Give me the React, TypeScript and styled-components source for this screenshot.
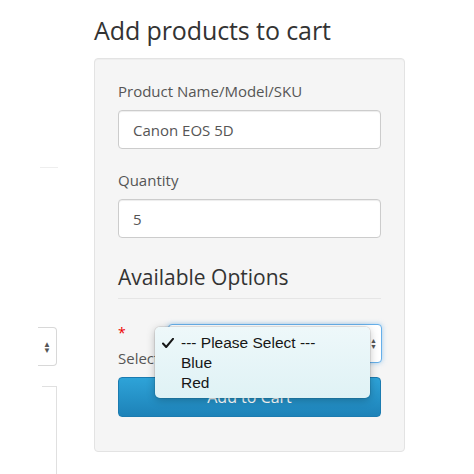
import React from 'react'
import styled, { createGlobalStyle } from 'styled-components'

const GlobalStyle = createGlobalStyle`
  html, body {
    margin: 0;
    padding: 0;
    background: #fff;
  }
  body {
    font-family: 'Open Sans', 'Liberation Sans', sans-serif;
    color: #333;
  }
`

const Page = styled.div`
  display: flex;
  width: 474px;
  height: 474px;
  overflow: hidden;
`

const SideCol = styled.div`
  width: 57px;
  display: flex;
  flex-direction: column;
  padding-top: 167px;
  box-sizing: border-box;
`

const FaintRule = styled.div`
  width: 18px;
  height: 1px;
  margin-left: 40px;
  background: #eee;
`

const SideSelect = styled.div`
  margin-top: 159px;
  margin-left: 38px;
  height: 39px;
  box-sizing: border-box;
  border: 1px solid #d8d8d8;
  border-left: none;
  border-radius: 0 4px 4px 0;
  display: flex;
  flex-direction: column;
  justify-content: center;
  align-items: flex-start;
  padding-left: 5px;
  color: #555;
  font-size: 8px;
  line-height: 6px;
`

const SidePanel = styled.div`
  margin-top: 20px;
  margin-left: 42px;
  flex: 1;
  border-top: 1px solid #e0e0e0;
  border-right: 1px solid #e0e0e0;
`

const Main = styled.div`
  margin-left: 37px;
  width: 311px;
  display: flex;
  flex-direction: column;
`

const Title = styled.h2`
  margin: 14px 0 0;
  font-size: 25px;
  font-weight: 400;
  line-height: 32px;
  color: #333;
  letter-spacing: -0.1px;
`

const Panel = styled.div`
  margin-top: 12px;
  background: #f5f5f5;
  border: 1px solid #e3e3e3;
  border-radius: 4px;
  padding: 22px 23px 34px;
  box-shadow: inset 0 1px 1px rgba(0, 0, 0, 0.03);
`

const FieldLabel = styled.label`
  display: block;
  font-size: 15px;
  line-height: 20px;
  color: #555;
`

const TextInput = styled.div<{ $gap?: number }>`
  margin-top: 9px;
  margin-bottom: ${(p) => p.$gap ?? 0}px;
  height: 39px;
  box-sizing: border-box;
  background: #fff;
  border: 1px solid #ccc;
  border-radius: 4px;
  box-shadow: inset 0 1px 1px rgba(0, 0, 0, 0.075);
  padding: 0 14px;
  display: flex;
  align-items: center;
  font-size: 15px;
  color: #555;
`

const SectionTitle = styled.h3`
  margin: 25px 0 0;
  font-size: 21px;
  font-weight: 400;
  line-height: 28px;
  color: #333;
  padding-bottom: 7px;
  border-bottom: 1px solid #e5e5e5;
`

const OptionRow = styled.div`
  margin-top: 25px;
  display: flex;
  align-items: flex-start;
`

const OptionLabel = styled.div`
  width: 50px;
  height: 39px;
  font-size: 15px;
  line-height: 20px;
  color: #555;
  padding-top: 2px;
  box-sizing: border-box;
`

const Required = styled.span`
  display: block;
  color: #e00;
  font-size: 14px;
  line-height: 14px;
  height: 22px;
`

const SelectWrap = styled.div`
  position: relative;
  flex: 1;
  margin-right: -1px;
`

const SelectBox = styled.div`
  height: 39px;
  box-sizing: border-box;
  background: #fff;
  border: 1px solid #66afe9;
  border-radius: 4px;
  box-shadow: 0 0 5px rgba(102, 175, 233, 0.6);
  display: flex;
  align-items: center;
  justify-content: flex-end;
  padding-right: 4px;
`

const Arrows = styled.div`
  display: flex;
  flex-direction: column;
  font-size: 7px;
  line-height: 6px;
  color: #555;
`

const Dropdown = styled.div`
  position: absolute;
  left: -13px;
  top: 3px;
  width: 215px;
  box-sizing: border-box;
  padding: 6px 0 5px;
  border-radius: 5px;
  background: linear-gradient(to bottom, #eef8fa, #dff2f5);
  box-shadow: 0 2px 8px rgba(0, 0, 0, 0.25), 0 0 0 1px rgba(0, 0, 0, 0.08);
  font-family: 'Liberation Sans', Arial, sans-serif;
  font-size: 15.5px;
  color: #161616;
  z-index: 2;
`

const MenuItem = styled.div`
  position: relative;
  height: 20px;
  line-height: 20px;
  padding-left: 26px;
`

const Check = styled.svg`
  position: absolute;
  left: 7px;
  top: 5px;
`

const CartButton = styled.button`
  margin-top: 14px;
  width: 100%;
  height: 40px;
  border: 1px solid #1b7bb0;
  border-radius: 4px;
  background: linear-gradient(to bottom, #2ea3d8, #1d82b8);
  color: #fff;
  font-family: 'Open Sans', sans-serif;
  font-size: 16px;
  cursor: pointer;
`

const options = ['--- Please Select ---', 'Blue', 'Red']

const App = () => {
  return (
    <Page>
      <GlobalStyle />
      <SideCol>
        <FaintRule />
        <SideSelect>
          <span>▲</span>
          <span>▼</span>
        </SideSelect>
        <SidePanel />
      </SideCol>
      <Main>
        <Title>Add products to cart</Title>
        <Panel>
          <FieldLabel>Product Name/Model/SKU</FieldLabel>
          <TextInput $gap={21}>Canon EOS 5D</TextInput>
          <FieldLabel>Quantity</FieldLabel>
          <TextInput>5</TextInput>
          <SectionTitle>Available Options</SectionTitle>
          <OptionRow>
            <OptionLabel>
              <Required>*</Required>
              Select
            </OptionLabel>
            <SelectWrap>
              <SelectBox>
                <Arrows>
                  <span>▲</span>
                  <span>▼</span>
                </Arrows>
              </SelectBox>
              <Dropdown>
                {options.map((o, i) => (
                  <MenuItem key={o}>
                    {i === 0 && (
                      <Check width="12" height="10" viewBox="0 0 12 10">
                        <path
                          d="M1 5.5 L4.2 9 L11 0.8"
                          fill="none"
                          stroke="#161616"
                          strokeWidth="2"
                          strokeLinecap="round"
                          strokeLinejoin="round"
                        />
                      </Check>
                    )}
                    {o}
                  </MenuItem>
                ))}
              </Dropdown>
            </SelectWrap>
          </OptionRow>
          <CartButton>Add to Cart</CartButton>
        </Panel>
      </Main>
    </Page>
  )
}

export default App
